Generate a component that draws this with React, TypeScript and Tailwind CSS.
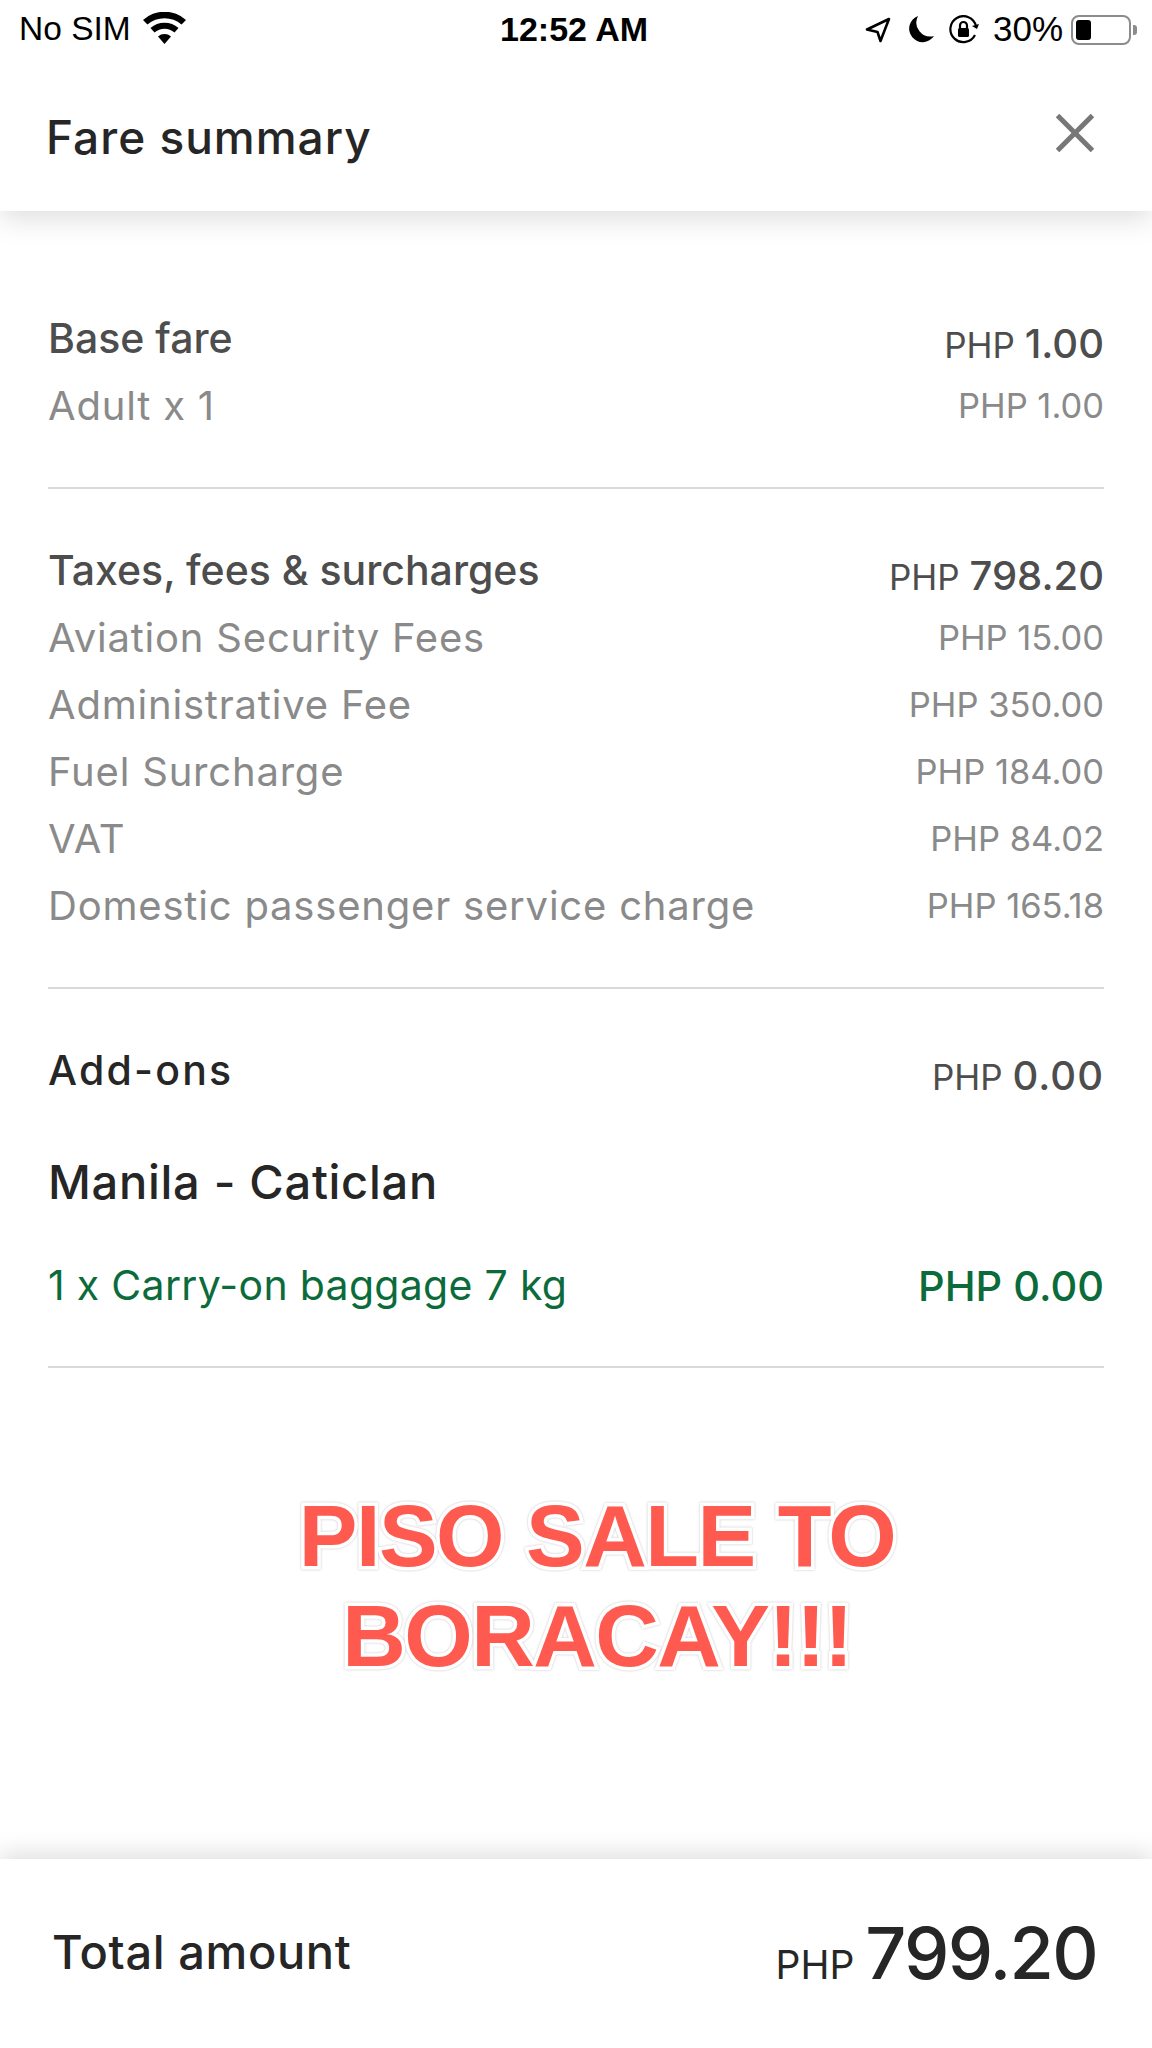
const sans = "font-['Inter','Noto_Sans',sans-serif]"

const taxes = [
    ["Aviation Security Fees", "PHP 15.00"],
    ["Administrative Fee", "PHP 350.00"],
    ["Fuel Surcharge", "PHP 184.00"],
    ["VAT", "PHP 84.02"],
    ["Domestic passenger service charge", "PHP 165.18"],
]

function StatusBar() {
    return (
        <div className="flex h-[56px] shrink-0 items-center justify-between pl-[19px] pr-[15px] pt-[3px] font-['Liberation_Sans',sans-serif] text-[33.500px] text-black">
            <div className="flex w-[264px] items-center gap-[12px]">
                <span>No SIM</span>
                <svg className="mb-[3px]" width="43" height="32" viewBox="0 0 43 32">
                    <path d="M21.500 32 15 24.500a10 10 0 0 1 13 0z" fill="#000" />
                    <path d="M11.500 20.500 7.500 16a21 21 0 0 1 28 0l-4 4.500a15 15 0 0 0-20 0z" fill="#000" />
                    <path d="M4.500 12.500 0 8a32 32 0 0 1 43 0l-4.500 4.500a26 26 0 0 0-34 0z" fill="#000" />
                </svg>
            </div>
            <span className="text-[34px] font-bold">12:52 AM</span>
            <div className="flex w-[272px] items-center justify-end">
                <svg width="26" height="26" viewBox="0 0 26 26" fill="none" stroke="#000" strokeWidth="2.600" strokeLinejoin="round">
                    <path d="M2 12.500 24 2l-8.500 22-3-9z" />
                </svg>
                <svg className="ml-[16px]" width="27" height="27" viewBox="0 0 27 27">
                    <path d="M11 0a14 14 0 0 0 16 20A13.500 13.500 0 1 1 11 0z" fill="#000" />
                </svg>
                <svg className="ml-[15px]" width="30" height="30" viewBox="0 0 30 30" fill="none" stroke="#000" strokeWidth="2.200">
                    <path d="M26 20a13 13 0 1 1 1-9" />
                    <path d="m23 11 5 3 2-5z" fill="#000" stroke="none" />
                    <rect x="9" y="13" width="11" height="9" rx="1.500" fill="#000" stroke="none" />
                    <path d="M11 13v-2.500a3.500 3.500 0 0 1 7 0V13" />
                </svg>
                <span className="ml-[14px] text-[35px]">30%</span>
                <div className="ml-[8px] flex h-[30px] w-[60px] items-center rounded-[8px] border-2 border-[#8c8c8c] p-[3px]">
                    <div className="h-full w-[15px] rounded-[3px] bg-black" />
                </div>
                <div className="ml-[2px] h-[10px] w-[4px] rounded-r-[3px] bg-[#8c8c8c]" />
            </div>
        </div>
    )
}

function SubRow({ label, amount }: { label: string; amount: string }) {
    return (
        <div className="flex h-[67px] items-center justify-between text-[#8a8a8a]">
            <span className="text-[40px] tracking-[0.8px]">{label}</span>
            <span className="text-[34.500px]">{amount}</span>
        </div>
    )
}

function HeadRow({ label, amount, dark }: { label: string; amount: string; dark?: boolean }) {
    return (
        <div className={`flex h-[67px] items-center justify-between ${dark ? "text-[#262626]" : "text-[#4d4d4d]"}`}>
            <span className={`text-[41px] font-medium ${dark ? "tracking-[2.200px]" : ""}`}>{label}</span>
            <span className="pt-[11px] text-[35px] text-[#4d4d4d]">
                PHP <span className={`text-[40px] font-medium ${dark ? "tracking-[1px]" : ""}`}>{amount}</span>
            </span>
        </div>
    )
}

export default function App() {
    return (
        <div className={`${sans} flex h-[2048px] w-[1152px] flex-col overflow-hidden bg-white`}>
            <header className="relative z-10 flex h-[211px] shrink-0 flex-col bg-white shadow-[0_8px_26px_rgba(0,0,0,0.13)]">
                <StatusBar />
                <div className="flex flex-1 items-start justify-between pl-[46px] pr-[58px] pt-[56px]">
                    <h1 className="text-[46px] leading-[50px] font-medium tracking-[1px] text-[#262626]">Fare summary</h1>
                    <svg className="mt-[2px]" width="38" height="38" viewBox="0 0 38 38" stroke="#777" strokeWidth="5">
                        <path d="m1.500 1.500 35 35M36.500 1.500l-35 35" />
                    </svg>
                </div>
            </header>

            <main className="flex flex-1 flex-col px-[48px]">
                <section className="border-b-2 border-[#d9d9d9] pb-[48px] pt-[94px]">
                    <HeadRow label="Base fare" amount="1.00" />
                    <SubRow label="Adult x 1" amount="PHP 1.00" />
                </section>

                <section className="border-b-2 border-[#d9d9d9] py-[48px]">
                    <HeadRow label="Taxes, fees & surcharges" amount="798.20" />
                    {taxes.map(([label, amount]) => (
                        <SubRow
                            key={label}
                            label={label}
                            amount={amount}
                        />
                    ))}
                </section>

                <section className="border-b-2 border-[#d9d9d9] pb-[55px] pt-[48px]">
                    <HeadRow
                        label="Add-ons"
                        amount="0.00"
                        dark
                    />
                    <h2 className="mt-[53px] text-[47px] leading-[50px] font-medium tracking-[0.7px] text-[#262626]">Manila - Caticlan</h2>
                    <div className="mt-[54px] flex h-[50px] items-center justify-between text-[#0b6b3a]">
                        <span className="text-[41px] tracking-[0.3px]">1 x Carry-on baggage 7 kg</span>
                        <span className="text-[41.500px] font-medium">PHP 0.00</span>
                    </div>
                </section>

                <div className="mt-[118px] text-center font-['Liberation_Sans',sans-serif] text-[88px] leading-[100px] font-bold tracking-[-1.500px] text-[#ff5a4f] [-webkit-text-stroke:7px_#ffffff] [paint-order:stroke_fill] [filter:drop-shadow(0_0_1px_#c4c4c4)]">
                    <div className="pl-[42px]">PISO SALE TO</div>
                    <div className="pl-[42px]">BORACAY!!!</div>
                </div>
            </main>

            <footer className="relative z-10 flex h-[189px] shrink-0 items-center justify-between bg-white pb-[2px] pl-[52px] pr-[55px] shadow-[0_-6px_22px_rgba(0,0,0,0.13)]">
                <span className="text-[47px] font-medium tracking-[0.6px] text-[#262626]">Total amount</span>
                <span className="text-[39px] text-[#262626]">
                    PHP <span className="text-[72px] font-medium tracking-[-1.700px]">799.20</span>
                </span>
            </footer>
        </div>
    )
}
